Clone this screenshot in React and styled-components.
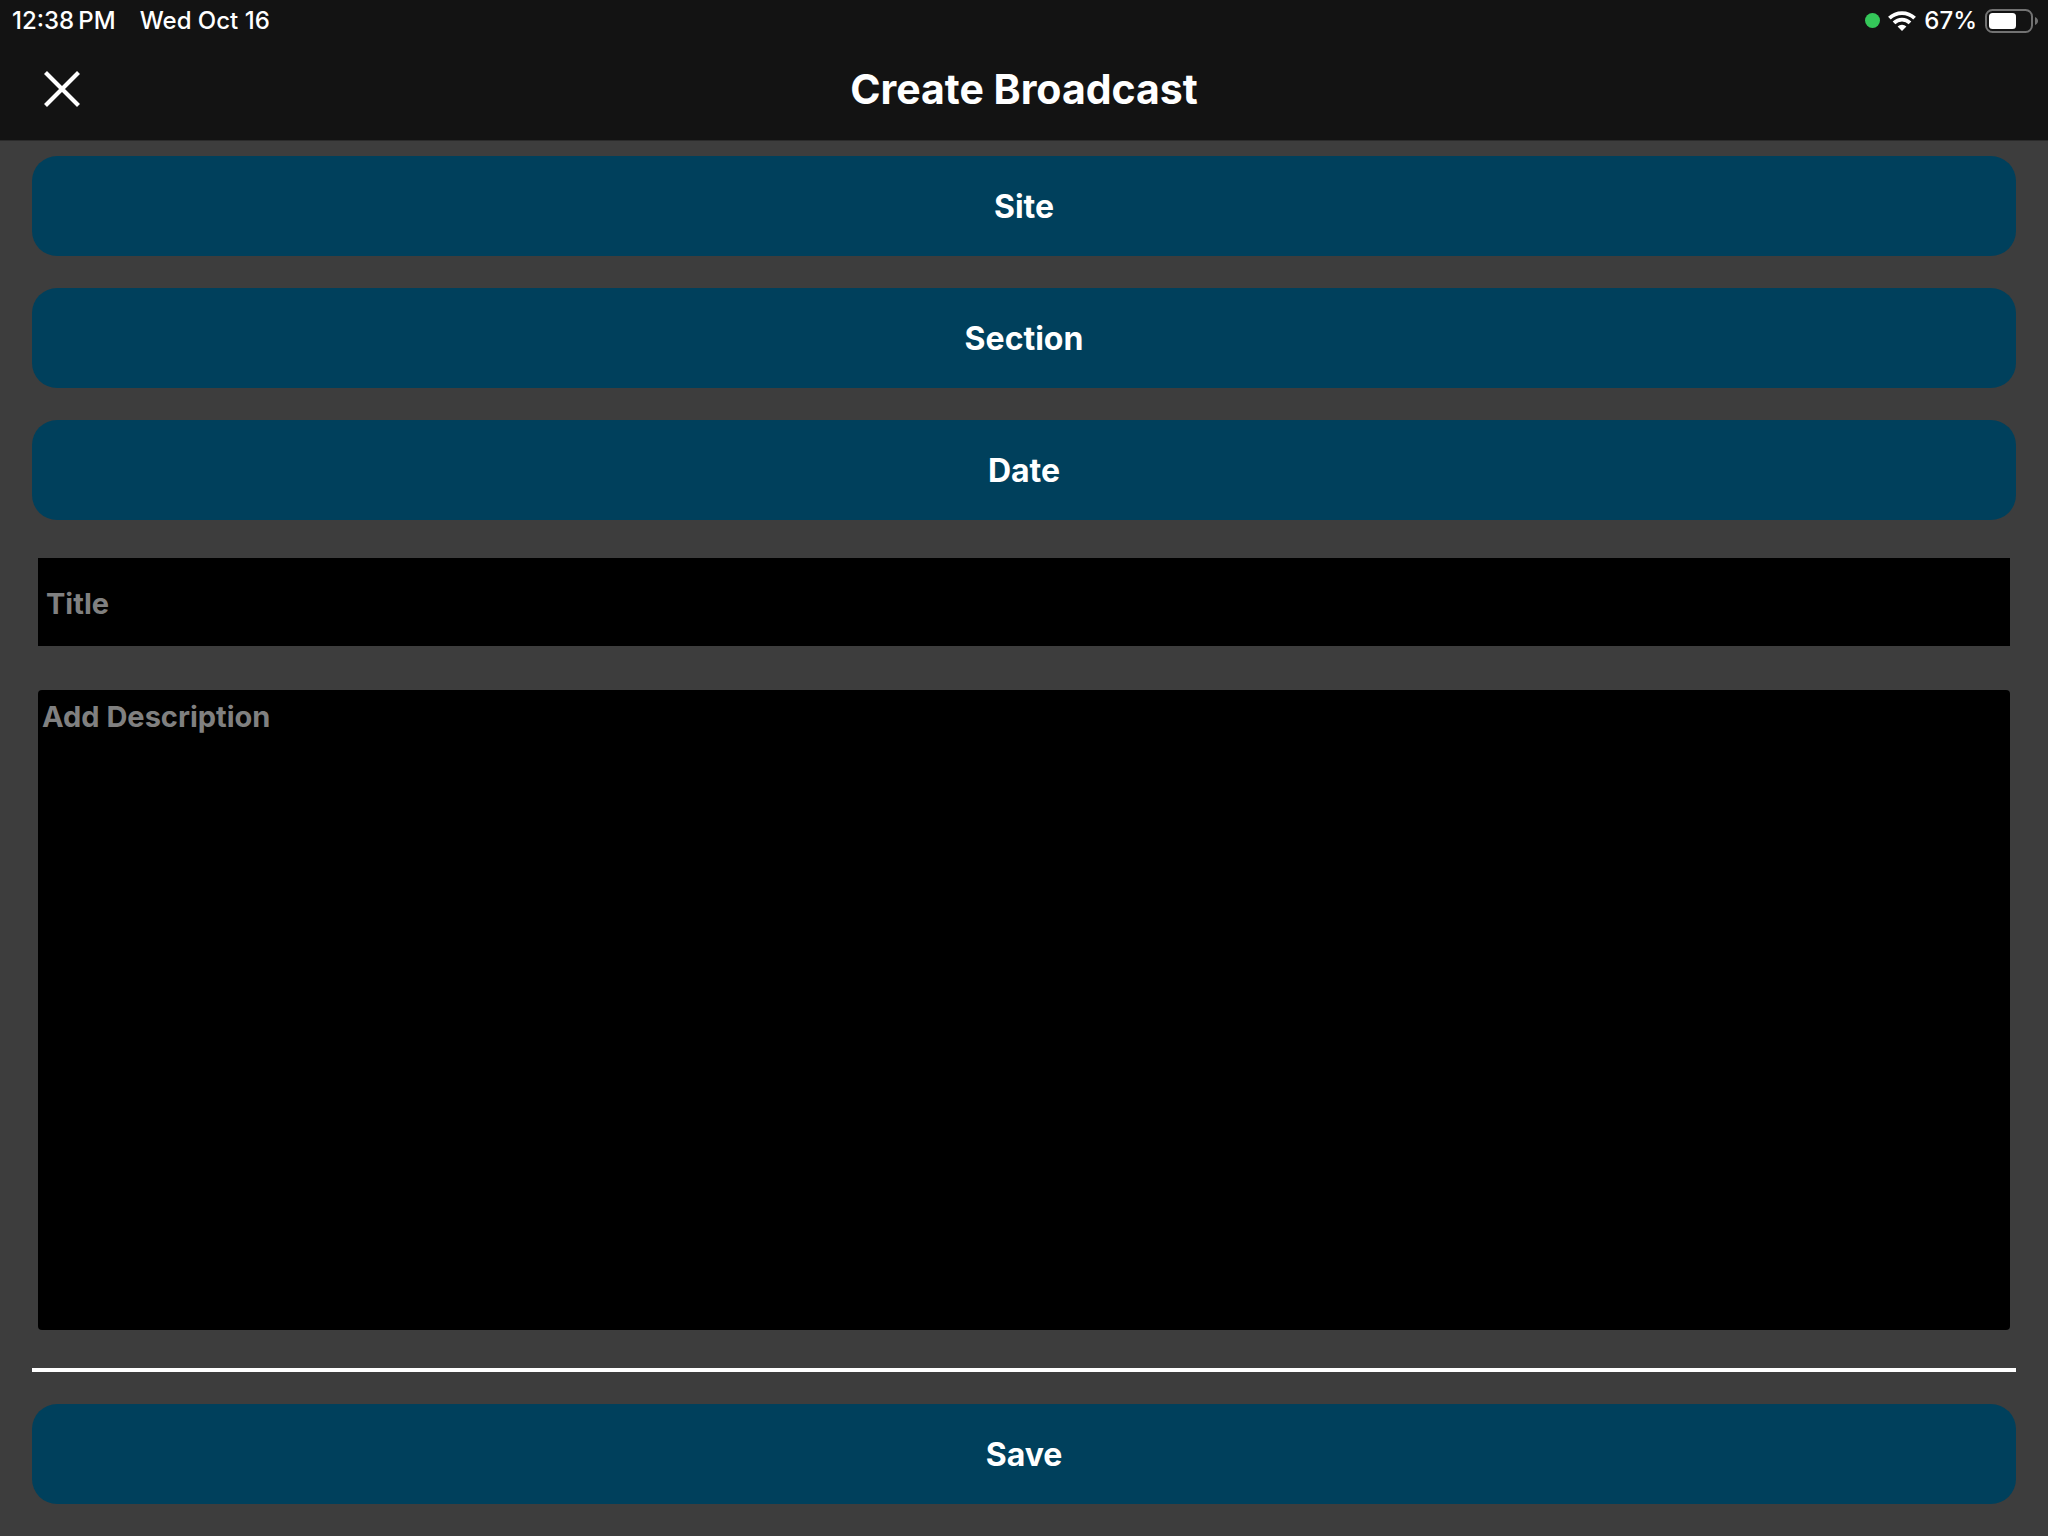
import React, { useState } from 'react';
import styled, { createGlobalStyle } from 'styled-components';

const GlobalStyle = createGlobalStyle`
  * {
    box-sizing: border-box;
  }

  body {
    margin: 0;
    background: #3d3d3d;
    color: #fff;
    font-family: Inter, 'Liberation Sans', sans-serif;
  }
`;

const CloseIcon = () => (
  <svg width="36" height="36" viewBox="0 0 36 36" aria-hidden="true">
    <path
      d="M1.5 1.5l33 33M34.5 1.5l-33 33"
      stroke="#fff"
      strokeWidth="4.2"
    />
  </svg>
);

const WifiIcon = () => (
  <svg width="28" height="20" viewBox="0 0 28 20" aria-hidden="true">
    <g fill="none" stroke="#fff" strokeWidth="3.8">
      <path d="M1.4 7.2a18 18 0 0 1 25.2 0" />
      <path d="M6 11.9a11.4 11.4 0 0 1 16 0" />
    </g>
    <path d="M14 20l-4.4-4.4a6.2 6.2 0 0 1 8.8 0z" fill="#fff" />
  </svg>
);

const BatteryIcon = () => (
  <svg width="54" height="24" viewBox="0 0 54 24" aria-hidden="true">
    <rect
      x="1"
      y="1"
      width="46"
      height="22"
      rx="6.5"
      fill="none"
      stroke="#727272"
      strokeWidth="2"
    />
    <rect x="4" y="4" width="27" height="16" rx="3.5" fill="#fff" />
    <path d="M50 8c4 1.6 4 6.4 0 8z" fill="#727272" />
  </svg>
);

const App = () => {
  const [title, setTitle] = useState('');
  const [description, setDescription] = useState('');

  return (
    <Screen>
      <GlobalStyle />
      <Header>
        <StatusBar>
          <StatusGroup $gap={24}>
            <span>12:38{'\u2009'}PM</span>
            <span>Wed Oct 16</span>
          </StatusGroup>
          <StatusGroup $gap={8}>
            <CameraDot />
            <WifiIcon />
            <span>67%</span>
            <BatteryIcon />
          </StatusGroup>
        </StatusBar>
        <NavBar>
          <CloseButton type="button" aria-label="Close">
            <CloseIcon />
          </CloseButton>
          <Heading>Create Broadcast</Heading>
        </NavBar>
      </Header>
      <Form onSubmit={e => e.preventDefault()}>
        <Pickers>
          <ActionButton type="button">Site</ActionButton>
          <ActionButton type="button">Section</ActionButton>
          <ActionButton type="button">Date</ActionButton>
        </Pickers>
        <Fields>
          <TitleInput
            aria-label="Title"
            placeholder="Title"
            value={title}
            onChange={e => setTitle(e.target.value)}
          />
          <DescriptionInput
            aria-label="Add Description"
            placeholder="Add Description"
            value={description}
            onChange={e => setDescription(e.target.value)}
          />
        </Fields>
        <Divider />
        <ActionButton type="submit">Save</ActionButton>
      </Form>
    </Screen>
  );
};

const Screen = styled.div`
  display: flex;
  flex-direction: column;
  min-height: 100vh;
`;

const Header = styled.header`
  background: #131313;
  border-bottom: 1px solid #2b2b2b;
`;

const StatusBar = styled.div`
  display: flex;
  align-items: center;
  justify-content: space-between;
  height: 40px;
  padding: 1px 9px 0 12px;
  font-size: 24px;
  line-height: 39px;
  font-weight: 500;
`;

const StatusGroup = styled.div`
  display: flex;
  align-items: center;
  gap: ${props => props.$gap}px;
`;

const CameraDot = styled.span`
  width: 15px;
  height: 15px;
  border-radius: 50%;
  background: #34c759;
`;

const NavBar = styled.div`
  display: grid;
  grid-template-columns: 1fr auto 1fr;
  align-items: center;
  height: 100px;
  padding: 0 44px 2px;
`;

const CloseButton = styled.button`
  display: flex;
  justify-self: start;
  padding: 0;
  border: none;
  background: none;
  cursor: pointer;
`;

const Heading = styled.h1`
  margin: 0;
  font-size: 41px;
  line-height: 48px;
  font-weight: 700;
`;

const Form = styled.form`
  display: flex;
  flex: 1;
  flex-direction: column;
  padding: 15px 32px 32px;
`;

const Pickers = styled.div`
  display: grid;
  gap: 32px;
`;

const ActionButton = styled.button`
  width: 100%;
  height: 100px;
  padding: 2px 0 0;
  border: none;
  border-radius: 25px;
  background: #00405c;
  color: #fff;
  font: 700 32px/40px Inter, 'Liberation Sans', sans-serif;
  cursor: pointer;
`;

const Fields = styled.div`
  display: flex;
  flex: 1;
  flex-direction: column;
  gap: 44px;
  padding: 38px 6px;
`;

const TitleInput = styled.input`
  width: 100%;
  height: 88px;
  padding: 2px 8px 0;
  border: none;
  border-radius: 0;
  background: #000;
  color: #fff;
  font: 700 29px/36px Inter, 'Liberation Sans', sans-serif;

  &::placeholder {
    color: #808080;
    opacity: 1;
  }
`;

const DescriptionInput = styled.textarea`
  flex: 1;
  width: 100%;
  min-height: 200px;
  padding: 9px 4px;
  border: none;
  border-radius: 4px;
  background: #000;
  color: #fff;
  font: 700 29px/36px Inter, 'Liberation Sans', sans-serif;
  resize: none;

  &::placeholder {
    color: #808080;
    opacity: 1;
  }
`;

const Divider = styled.hr`
  width: 100%;
  height: 4px;
  margin: 0 0 32px;
  border: none;
  background: #fff;
`;

export default App;
